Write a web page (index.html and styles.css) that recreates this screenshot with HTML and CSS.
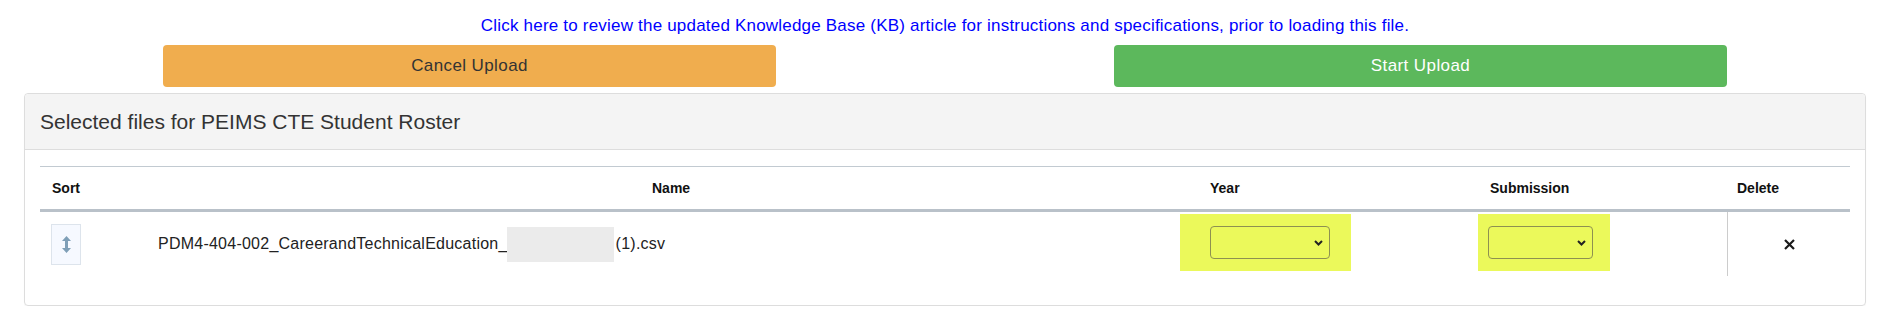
FILE: index.html
```html
<!DOCTYPE html>
<html lang="en">
<head>
<meta charset="utf-8">
<title>Upload</title>
<link rel="stylesheet" href="styles.css">
</head>
<body>
<div class="page">
  <p class="kb"><a href="#">Click here to review the updated Knowledge Base (KB) article for instructions and specifications, prior to loading this file.</a></p>
  <div class="actions">
    <button class="btn btn-cancel" type="button">Cancel Upload</button>
    <button class="btn btn-start" type="button">Start Upload</button>
  </div>
  <div class="panel">
    <div class="panel-heading">Selected files for PEIMS CTE Student Roster</div>
    <div class="panel-body">
      <div class="table">
        <div class="tr thead">
          <div class="th th-sort">Sort</div>
          <div class="th th-name">Name</div>
          <div class="th th-year">Year</div>
          <div class="th th-sub">Submission</div>
          <div class="th th-del">Delete</div>
        </div>
        <div class="tr tbody">
          <div class="td td-sort">
            <span class="sort-btn">
              <svg width="9" height="17" viewBox="0 0 9 17"><path d="M4.5 0 L9 5 L6 5 L6 12 L9 12 L4.5 17 L0 12 L3 12 L3 5 L0 5 Z" fill="#7f9fb7"/></svg>
            </span>
          </div>
          <div class="td td-name">PDM4-404-002_CareerandTechnicalEducation_<span class="redact"></span>(1).csv</div>
          <div class="td td-year">
            <div class="hl hl-year">
              <div class="select sel-year">
                <svg width="9" height="6" viewBox="0 0 9 6"><path d="M1 1 L4.5 4.5 L8 1" fill="none" stroke="#222" stroke-width="2"/></svg>
              </div>
            </div>
          </div>
          <div class="td td-sub">
            <div class="hl hl-sub">
              <div class="select sel-sub">
                <svg width="9" height="6" viewBox="0 0 9 6"><path d="M1 1 L4.5 4.5 L8 1" fill="none" stroke="#222" stroke-width="2"/></svg>
              </div>
            </div>
          </div>
          <div class="td td-del">
            <svg width="11" height="11" viewBox="0 0 11 11"><path d="M1 1 L10 10 M10 1 L1 10" stroke="#1a1a1a" stroke-width="2.2" fill="none"/></svg>
          </div>
        </div>
      </div>
    </div>
  </div>
</div>
</body>
</html>
```

FILE: styles.css
```css
html, body {
  margin: 0;
  padding: 0;
  background: #fff;
}
body {
  font-family: "Liberation Sans", Arial, Helvetica, sans-serif;
  color: #333;
}
.page {
  margin: 0 15px 0 24px;
}
.kb {
  margin: 17px 0 0;
  line-height: 18px;
  font-size: 17px;
  letter-spacing: 0.2px;
  text-align: center;
}
.kb a {
  color: #0000ff;
  text-decoration: none;
}
.actions {
  display: flex;
  justify-content: center;
  gap: 338px;
  margin-top: 10px;
}
.btn {
  width: 613px;
  height: 42px;
  border: none;
  border-radius: 4px;
  font-family: "Liberation Sans", Arial, sans-serif;
  font-size: 17px;
  letter-spacing: 0.4px;
  padding: 0;
}
.btn-cancel {
  background: #f0ad4e;
  color: #333;
}
.btn-start {
  background: #5cb85c;
  color: #fff;
}
.panel {
  margin-top: 6px;
  border: 1px solid #dddddd;
  border-radius: 4px;
  box-shadow: 0 1px 1px rgba(0,0,0,.04);
}
.panel-heading {
  height: 55px;
  display: flex;
  align-items: center;
  padding-left: 15px;
  background: #f4f4f4;
  border-bottom: 1px solid #dddddd;
  border-radius: 4px 4px 0 0;
  font-size: 21px;
  color: #333;
}
.panel-body {
  padding: 16px 15px 29px 15px;
}
.tr {
  display: grid;
  grid-template-columns: 100px 1030px 250px 307px 1fr;
}
.thead {
  border-top: 1px solid #c2cad1;
  border-bottom: 3px solid #b9c1c9;
  height: 42px;
  align-items: center;
}
.th {
  font-size: 14px;
  font-weight: bold;
  color: #111;
}
.th-sort { padding-left: 12px; }
.th-name { padding-left: 512px; }
.th-year { padding-left: 40px; }
.th-sub { padding-left: 70px; }
.th-del { padding-left: 10px; }
.tbody {
  height: 64px;
}
.td {
  display: flex;
  align-items: center;
}
.sort-btn {
  margin-left: 11px;
  width: 28px;
  height: 39px;
  border: 1px solid #dde4ec;
  background: #f6f9ff;
  display: flex;
  align-items: center;
  justify-content: center;
}
.td-name {
  padding-left: 18px;
  font-size: 16px;
  letter-spacing: 0.24px;
  color: #222;
}
.redact {
  display: inline-block;
  width: 107px;
  height: 35px;
  margin: 0 2px 0 -1px;
  background: #ebebeb;
}
.td-year, .td-sub {
  align-items: flex-start;
}
.hl {
  background: #ebf95b;
  height: 57px;
  margin-top: 2px;
  display: flex;
  align-items: center;
}
.hl-year {
  width: 171px;
  margin-left: 10px;
  padding-left: 30px;
  box-sizing: border-box;
}
.hl-sub {
  width: 132px;
  margin-left: 58px;
  padding-left: 10px;
  box-sizing: border-box;
}
.select {
  height: 33px;
  box-sizing: border-box;
  border: 1px solid #8e9150;
  border-radius: 4px;
  display: flex;
  align-items: center;
  justify-content: flex-end;
  padding-right: 6px;
}
.sel-year { width: 120px; }
.sel-sub { width: 105px; }
.td-del {
  border-left: 1px solid #cccccc;
  justify-content: center;
}
```
